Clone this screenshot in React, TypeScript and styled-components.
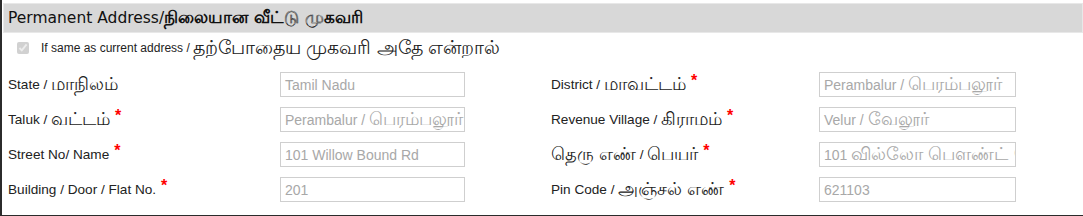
import React from "react";
import styled, { createGlobalStyle } from "styled-components";

const Global = createGlobalStyle`
  html, body { margin: 0; padding: 0; background: #fff; }
  body { font-family: "Liberation Sans", Arial, sans-serif; }
`;

const Frame = styled.div`
  width: 1083px;
  height: 216px;
  box-sizing: border-box;
  border-left: 2px solid #2b2b2b;
  border-bottom: 1px solid #2b2b2b;
  padding: 3px 0 0 1px;
  overflow: hidden;
`;

const Header = styled.div`
  height: 30px;
  box-sizing: border-box;
  background: #d8d8d8;
  border: 1px solid #e8e8e8;
  display: flex;
  align-items: center;
  padding-left: 4px;
  font-family: "DejaVu Sans", Verdana, sans-serif;
  font-size: 15.5px;
  color: #111;
  white-space: nowrap;
`;

const HeaderTamil = styled.span`
  font-weight: bold;
  font-size: 17px;
`;

const CheckRow = styled.label`
  display: flex;
  align-items: center;
  height: 30px;
  padding-left: 14px;
  font-size: 12px;
  color: #222;
  white-space: pre;
`;

const Check = styled.input`
  margin: 0 12px 0 0;
  width: 12px;
  height: 12px;
`;

const Ta = styled.span<{ $scale: number }>`
  font-size: ${(p) => p.$scale}em;
  line-height: 1;
`;

const Grid = styled.div`
  display: grid;
  grid-template-columns: 272px 185px 86px 268px 197px;
  grid-auto-rows: 35px;
  padding: 4px 0 0 5px;
  align-items: center;
`;

const Label = styled.div`
  font-size: 13.6px;
  color: #222;
  white-space: pre;
  display: flex;
  align-items: center;
`;

const Star = styled.span`
  color: #f00;
  font-weight: bold;
  font-size: 16px;
  position: relative;
  top: -4px;
  margin-left: 5px;
`;

const Field = styled.div`
  height: 25px;
  box-sizing: border-box;
  border: 1px solid #cfcfcf;
  background: #fff;
  color: #a8a8a8;
  font-size: 14px;
  padding: 0 4px;
  display: flex;
  align-items: center;
  white-space: pre;
  overflow: hidden;
  cursor: default;
`;

const Spacer = styled.div``;

const TAMIL = /([\u0B80-\u0BFF]+(?:[\s][\u0B80-\u0BFF]+)*)/;

const Mixed = ({ text, scale }: { text: string; scale: number }) => (
  <>
    {text.split(TAMIL).map((part, i) =>
      TAMIL.test(part) ? (
        <Ta key={i} $scale={scale}>
          {part}
        </Ta>
      ) : (
        <React.Fragment key={i}>{part}</React.Fragment>
      )
    )}
  </>
);

type Item = { label: string; req: boolean; value: string };

const rows: [Item, Item][] = [
  [
    { label: "State / மாநிலம்", req: false, value: "Tamil Nadu" },
    { label: "District / மாவட்டம்", req: true, value: "Perambalur / பெரம்பலூர்" },
  ],
  [
    { label: "Taluk / வட்டம்", req: true, value: "Perambalur / பெரம்பலூர்" },
    { label: "Revenue Village / கிராமம்", req: true, value: "Velur / வேலூர்" },
  ],
  [
    { label: "Street No/ Name", req: true, value: "101 Willow Bound Rd" },
    { label: "தெரு எண் / பெயர்", req: true, value: "101 வில்லோ பௌண்ட் ரோடு" },
  ],
  [
    { label: "Building / Door / Flat No.", req: true, value: "201" },
    { label: "Pin Code / அஞ்சல் எண்", req: true, value: "621103" },
  ],
];

const Cell = ({ item }: { item: Item }) => (
  <>
    <Label>
      <Mixed text={item.label} scale={1.32} />
      {item.req && <Star>*</Star>}
    </Label>
    <Field role="textbox" aria-readonly="true" aria-disabled="true">
      <Mixed text={item.value} scale={1.32} />
    </Field>
  </>
);

export default function App() {
  return (
    <>
      <Global />
      <Frame>
        <Header>
          Permanent Address/<HeaderTamil>நிலையான வீட்டு முகவரி</HeaderTamil>
        </Header>
        <CheckRow>
          <Check type="checkbox" checked disabled readOnly />
          {"If same as current address / "}
          <Ta $scale={1.6}>தற்போதைய முகவரி அதே என்றால்</Ta>
        </CheckRow>
        <Grid>
          {rows.map(([a, b], i) => (
            <React.Fragment key={i}>
              <Cell item={a} />
              <Spacer />
              <Cell item={b} />
            </React.Fragment>
          ))}
        </Grid>
      </Frame>
    </>
  );
}
